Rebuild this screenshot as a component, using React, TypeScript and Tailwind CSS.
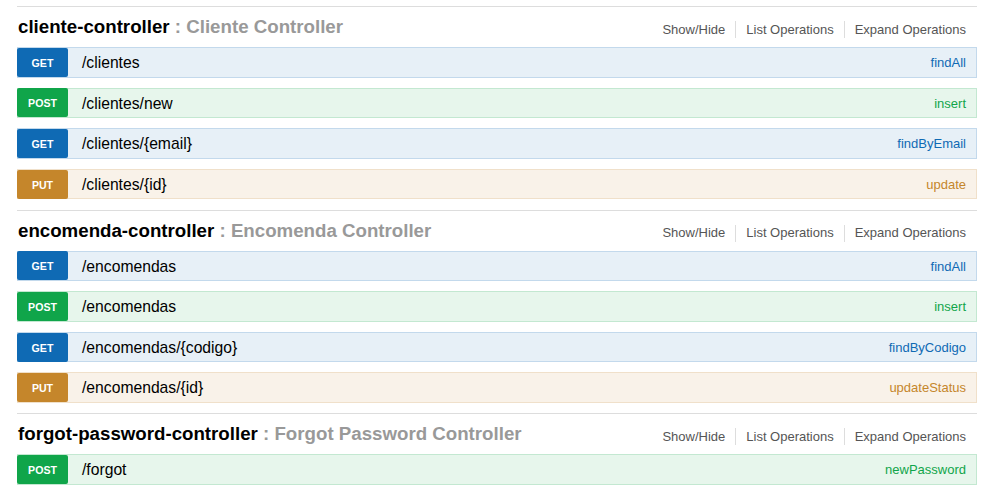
import React from 'react';

type Method = 'GET' | 'POST' | 'PUT';

const methodStyles: Record<Method, { badge: string; row: string; text: string }> = {
  GET: { badge: 'bg-[#0f6ab4]', row: 'bg-[#e7f0f7] border-[#c3d9ec]', text: 'text-[#0f6ab4]' },
  POST: { badge: 'bg-[#10a54a]', row: 'bg-[#e7f6ec] border-[#c3e8d1]', text: 'text-[#10a54a]' },
  PUT: { badge: 'bg-[#c5862b]', row: 'bg-[#f9f2e9] border-[#f0e0ca]', text: 'text-[#c5862b]' },
};

const sections: { name: string; title: string; ops: { method: Method; path: string; op: string }[] }[] = [
  {
    name: 'cliente-controller',
    title: 'Cliente Controller',
    ops: [
      { method: 'GET', path: '/clientes', op: 'findAll' },
      { method: 'POST', path: '/clientes/new', op: 'insert' },
      { method: 'GET', path: '/clientes/{email}', op: 'findByEmail' },
      { method: 'PUT', path: '/clientes/{id}', op: 'update' },
    ],
  },
  {
    name: 'encomenda-controller',
    title: 'Encomenda Controller',
    ops: [
      { method: 'GET', path: '/encomendas', op: 'findAll' },
      { method: 'POST', path: '/encomendas', op: 'insert' },
      { method: 'GET', path: '/encomendas/{codigo}', op: 'findByCodigo' },
      { method: 'PUT', path: '/encomendas/{id}', op: 'updateStatus' },
    ],
  },
  {
    name: 'forgot-password-controller',
    title: 'Forgot Password Controller',
    ops: [{ method: 'POST', path: '/forgot', op: 'newPassword' }],
  },
];

const OperationRow: React.FC<{ method: Method; path: string; op: string }> = ({ method, path, op }) => {
  const s = methodStyles[method];
  return (
    <div className={`flex items-center h-[30.5px] mb-[10.15px] border ${s.row}`}>
      <div className={`${s.badge} w-[51px] h-[29px] -ml-px rounded-[2px] flex items-center justify-center pt-[3px] text-white font-bold text-[10.6px]`}>
        {method}
      </div>
      <span className="ml-[14px] pt-[1px] text-[15.7px] text-black">{path}</span>
      <span className={`ml-auto pr-[10px] pt-[1px] text-[13px] ${s.text}`}>{op}</span>
    </div>
  );
};

export default function App() {
  return (
    <div className="bg-white w-[988px] h-[496px] overflow-hidden pt-[6px] pl-[17px]" style={{ fontFamily: '"Liberation Sans", Arial, sans-serif' }}>
      <div className="w-[960px]">
        {sections.map((sec) => (
          <div key={sec.name} className="border-t border-[#dddddd]">
            <div className="h-[40px] flex items-center">
              <h2 className="ml-[1px] text-[18.7px] font-bold text-black">
                {sec.name} <span className="text-[#999999]">: {sec.title}</span>
              </h2>
              <div className="ml-auto mt-[5px] flex items-center text-[13px] text-[#555555] pr-[11px]">
                <span className="pr-[10px]">Show/Hide</span>
                <span className="border-l border-[#dddddd] h-[17px]" />
                <span className="px-[10px]">List Operations</span>
                <span className="border-l border-[#dddddd] h-[17px]" />
                <span className="pl-[10px]">Expand Operations</span>
              </div>
            </div>
            {sec.ops.map((o) => (
              <OperationRow key={o.method + o.path} {...o} />
            ))}
          </div>
        ))}
      </div>
    </div>
  );
}
